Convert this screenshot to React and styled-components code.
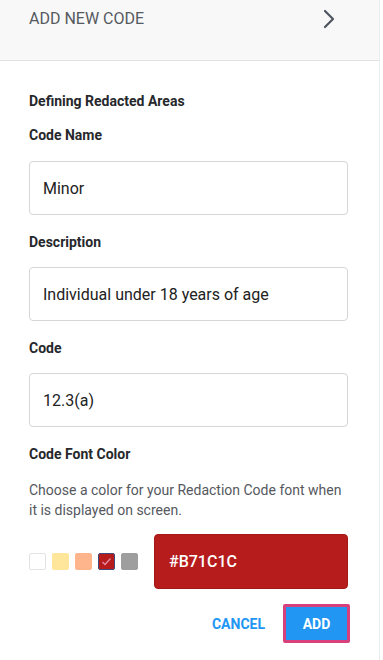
import styled, { createGlobalStyle } from 'styled-components'

const GlobalStyle = createGlobalStyle`
  html, body {
    margin: 0;
    padding: 0;
    background: #ffffff;
  }
  body {
    font-family: Roboto, 'Liberation Sans', sans-serif;
    -webkit-font-smoothing: antialiased;
  }
`

const Page = styled.div`
  display: flex;
  width: 383px;
  min-height: 660px;
`

const Panel = styled.div`
  width: 380px;
  border-right: 1px solid #ececec;
  box-sizing: border-box;
  display: flex;
  flex-direction: column;
`

const Header = styled.div`
  height: 61px;
  box-sizing: border-box;
  background: #f8f8f9;
  border-bottom: 1px solid #e2e2e2;
  padding: 9px 44px 0 29px;
  display: flex;
  align-items: flex-start;
  justify-content: space-between;
`

const HeaderTitle = styled.div`
  font-size: 16px;
  line-height: 20px;
  color: #555a60;
`

const Chevron = styled.svg`
  display: block;
`

const Body = styled.div`
  padding: 32px 31px 0 29px;
  display: flex;
  flex-direction: column;
`

const Label = styled.div`
  font-size: 14px;
  line-height: 16px;
  font-weight: 700;
  color: #26282c;
  margin-bottom: ${p => p.gap || 17}px;
`

const Field = styled.input`
  height: 54px;
  box-sizing: border-box;
  border: 1px solid #d6d6d6;
  border-radius: 4px;
  padding: 0 13px;
  font-family: inherit;
  font-size: 16px;
  color: #222;
  background: #fff;
  margin-bottom: 19px;
  outline: none;
`

const Help = styled.p`
  margin: 0 0 14px;
  font-size: 14px;
  line-height: 20px;
  color: #55585e;
`

const ColorRow = styled.div`
  display: flex;
  align-items: center;
  gap: 16px;
`

const Swatches = styled.div`
  display: flex;
  gap: 6px;
`

const Swatch = styled.div`
  width: 17px;
  height: 17px;
  box-sizing: border-box;
  border-radius: 2px;
  background: ${p => p.color};
  border: 1px solid ${p => (p.selected ? '#3d4a7a' : p.edge || p.color)};
  display: flex;
  align-items: center;
  justify-content: center;
`

const ColorValue = styled.div`
  flex: 1;
  height: 55px;
  border-radius: 4px;
  background: #b71c1c;
  border: 1px solid #a51818;
  box-sizing: border-box;
  display: flex;
  align-items: center;
  padding: 0 14px;
  font-size: 16px;
  font-weight: 500;
  color: #fff;
`

const Actions = styled.div`
  display: flex;
  justify-content: flex-end;
  align-items: center;
  gap: 18px;
  margin-top: 15px;
  margin-right: -2px;
`

const TextButton = styled.button`
  background: none;
  border: none;
  padding: 0;
  font-family: inherit;
  font-size: 14px;
  font-weight: 700;
  color: #2196f3;
  cursor: pointer;
`

const PrimaryButton = styled.button`
  width: 67px;
  height: 39px;
  box-sizing: border-box;
  background: #2196f3;
  border: 3px solid #d8407c;
  border-radius: 2px;
  font-family: inherit;
  font-size: 14px;
  font-weight: 700;
  color: #fff;
  cursor: pointer;
`

const swatches = [
  { color: '#ffffff', edge: '#e3e3e3' },
  { color: '#ffe69b' },
  { color: '#ffb58c' },
  { color: '#b71c1c', selected: true },
  { color: '#9e9e9e' },
]

const App = () => {
  return (
    <>
      <GlobalStyle />
      <Page>
        <Panel>
          <Header>
            <HeaderTitle>ADD NEW CODE</HeaderTitle>
            <Chevron width="12" height="20" viewBox="0 0 12 20">
              <path d="M2 2 L10 10 L2 18" fill="none" stroke="#4f5461" strokeWidth="2.2" strokeLinecap="round" strokeLinejoin="round" />
            </Chevron>
          </Header>
          <Body>
            <Label gap={18}>Defining Redacted Areas</Label>
            <Label gap={18}>Code Name</Label>
            <Field defaultValue="Minor" />
            <Label>Description</Label>
            <Field defaultValue="Individual under 18 years of age" />
            <Label>Code</Label>
            <Field defaultValue="12.3(a)" />
            <Label gap={18}>Code Font Color</Label>
            <Help>Choose a color for your Redaction Code font when it is displayed on screen.</Help>
            <ColorRow>
              <Swatches>
                {swatches.map(s => (
                  <Swatch key={s.color} color={s.color} edge={s.edge} selected={s.selected}>
                    {s.selected && (
                      <svg width="11" height="9" viewBox="0 0 11 9">
                        <path d="M1.5 5 L4 7.5 L9.5 1.5" fill="none" stroke="#e48aa6" strokeWidth="1.3" />
                      </svg>
                    )}
                  </Swatch>
                ))}
              </Swatches>
              <ColorValue>#B71C1C</ColorValue>
            </ColorRow>
            <Actions>
              <TextButton>CANCEL</TextButton>
              <PrimaryButton>ADD</PrimaryButton>
            </Actions>
          </Body>
        </Panel>
      </Page>
    </>
  )
}

export default App
